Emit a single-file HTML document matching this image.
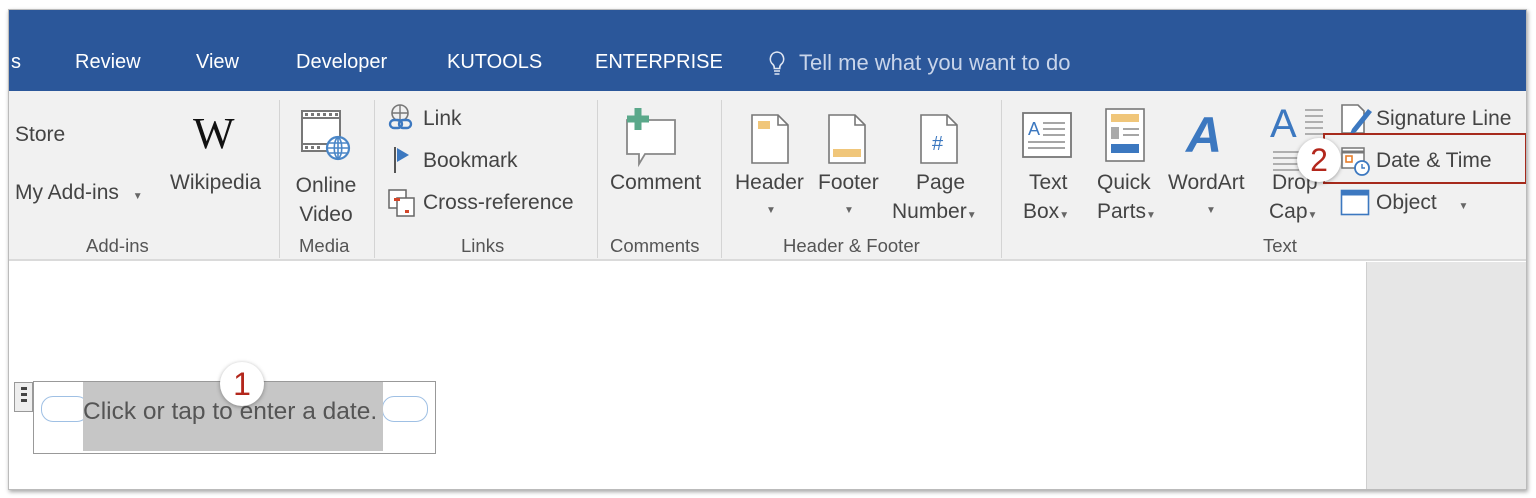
<!DOCTYPE html>
<html><head><meta charset="utf-8"><style>
*{margin:0;padding:0;box-sizing:border-box}
body{width:1536px;height:498px;background:#fff;position:relative;overflow:hidden;font-family:"Liberation Sans",sans-serif;color:#444}
.frame{position:absolute;left:8px;top:9px;width:1519px;height:481px;border:1px solid #bbb;box-shadow:1px 2px 4px rgba(0,0,0,.35);overflow:hidden;background:#fff}
.blue{position:absolute;left:0;top:0;width:100%;height:81px;background:#2b579a}
.tab{position:absolute;top:41px;color:#fff;font-size:20px}
.rib{position:absolute;left:0;top:81px;width:100%;height:170px;background:#f1f1f1;border-bottom:2px solid #dadada}
.t{position:absolute;font-size:21px;color:#444;white-space:nowrap}
.g{position:absolute;top:225px;font-size:18.5px;color:#555}
.sep{position:absolute;top:90px;width:1px;height:158px;background:#d4d4d4}
.c{text-align:center}
.arr{font-size:10px;color:#666}
.doc{position:absolute;left:0;top:252px;width:1357px;height:230px;background:#fff}
.grey{position:absolute;left:1357px;top:252px;width:162px;height:230px;background:#e6e6e6;border-left:1px solid #cfcfcf}
.badge{position:absolute;width:44px;height:44px;border-radius:50%;background:#fff;box-shadow:0 1px 4px rgba(0,0,0,.35);color:#b3271c;font-size:32px;text-align:center;line-height:44px}
</style></head><body>
<div class="frame">
<div class="blue">
<div class="tab" style="left:2px">s</div>
<div class="tab" style="left:66px">Review</div>
<div class="tab" style="left:187px">View</div>
<div class="tab" style="left:287px">Developer</div>
<div class="tab" style="left:438px">KUTOOLS</div>
<div class="tab" style="left:586px">ENTERPRISE</div>
<svg style="position:absolute;left:757px;top:40px" width="22" height="26" viewBox="0 0 22 26"><path d="M11 2a7 7 0 0 0-4 12.5c1 1 1.3 2 1.3 4h5.4c0-2 .3-3 1.3-4A7 7 0 0 0 11 2z" fill="none" stroke="#dfe6f2" stroke-width="1.6"/><path d="M8 21h6M8.5 24h5" stroke="#dfe6f2" stroke-width="1.6"/></svg>
<div class="tab" style="left:790px;color:#c9d5ea;font-size:22px;top:40px">Tell me what you want to do</div>
</div>
<div class="rib"></div>
<!-- Add-ins -->
<div class="t" style="left:6px;top:113px">Store</div>
<div class="t" style="left:6px;top:171px">My Add-ins <span class="arr" style="margin-left:8px">▼</span></div>
<div class="t" style="left:184px;top:98px;font-family:'Liberation Serif',serif;font-size:44px;color:#111">W</div>
<div class="t" style="left:161px;top:161px">Wikipedia</div>
<div class="g" style="left:77px">Add-ins</div>
<div class="sep" style="left:270px"></div>
<!-- Media -->
<svg style="position:absolute;left:290px;top:99px" width="52" height="52" viewBox="0 0 52 52"><rect x="3" y="2" width="38" height="40" fill="#fff" stroke="#777" stroke-width="2"/><path d="M3 9h38M3 35h38" stroke="#777" stroke-width="2"/><g fill="#777"><rect x="6" y="4" width="3" height="3"/><rect x="12" y="4" width="3" height="3"/><rect x="18" y="4" width="3" height="3"/><rect x="24" y="4" width="3" height="3"/><rect x="30" y="4" width="3" height="3"/><rect x="36" y="4" width="3" height="3"/><rect x="6" y="37" width="3" height="3"/><rect x="12" y="37" width="3" height="3"/><rect x="18" y="37" width="3" height="3"/></g><circle cx="39" cy="39" r="11" fill="#fff" stroke="#4a86c7" stroke-width="2.2"/><path d="M28 39h22M39 28v22M30 34h18M30 44h18M39 28c-5 4-5 18 0 22M39 28c5 4 5 18 0 22" stroke="#4a86c7" stroke-width="1.6" fill="none"/></svg>
<div class="t c" style="left:282px;top:161px;width:70px;line-height:29px">Online<br>Video</div>
<div class="g" style="left:290px">Media</div>
<div class="sep" style="left:365px"></div>
<!-- Links -->
<svg style="position:absolute;left:378px;top:93px" width="30" height="30" viewBox="0 0 30 30"><circle cx="13" cy="10" r="8" fill="none" stroke="#777" stroke-width="1.6"/><path d="M5 10h16M13 2v16" stroke="#777" stroke-width="1.4"/><rect x="3" y="17" width="12" height="8" rx="4" fill="none" stroke="#3c78c0" stroke-width="2.4"/><rect x="12" y="17" width="12" height="8" rx="4" fill="none" stroke="#3c78c0" stroke-width="2.4"/></svg>
<div class="t" style="left:414px;top:97px">Link</div>
<svg style="position:absolute;left:382px;top:135px" width="24" height="30" viewBox="0 0 24 30"><path d="M4 2v26" stroke="#555" stroke-width="2"/><path d="M6 3l12 7-12 7z" fill="#3c78c0"/></svg>
<div class="t" style="left:414px;top:139px">Bookmark</div>
<svg style="position:absolute;left:378px;top:178px" width="30" height="30" viewBox="0 0 30 30"><rect x="2" y="2" width="17" height="18" fill="#fff" stroke="#666" stroke-width="1.5"/><rect x="10" y="10" width="17" height="18" fill="#fff" stroke="#666" stroke-width="1.5"/><rect x="7" y="10" width="6" height="3" fill="#d2462a"/><rect x="18" y="22" width="4" height="3" fill="#d2462a"/></svg>
<div class="t" style="left:414px;top:181px">Cross-reference</div>
<div class="g" style="left:452px">Links</div>
<div class="sep" style="left:588px"></div>
<!-- Comments -->
<svg style="position:absolute;left:614px;top:98px" width="66" height="60" viewBox="0 0 66 60"><path d="M4 12h48v34H22l-6 10v-10H4z" fill="#fff" stroke="#888" stroke-width="1.8"/><path d="M15 0v22M4 11h22" stroke="#5aa88a" stroke-width="7"/></svg>
<div class="t" style="left:601px;top:161px">Comment</div>
<div class="g" style="left:601px">Comments</div>
<div class="sep" style="left:712px"></div>
<!-- Header & Footer -->
<svg style="position:absolute;left:741px;top:103px" width="40" height="52" viewBox="0 0 40 52"><path d="M2 2h26l10 10v38H2z" fill="#fff" stroke="#777" stroke-width="1.6"/><path d="M28 2v10h10" fill="none" stroke="#777" stroke-width="1.6"/><rect x="8" y="8" width="12" height="8" fill="#f0c67a"/></svg>
<svg style="position:absolute;left:818px;top:103px" width="40" height="52" viewBox="0 0 40 52"><path d="M2 2h26l10 10v38H2z" fill="#fff" stroke="#777" stroke-width="1.6"/><path d="M28 2v10h10" fill="none" stroke="#777" stroke-width="1.6"/><rect x="6" y="36" width="28" height="8" fill="#f0c67a"/></svg>
<svg style="position:absolute;left:910px;top:103px" width="40" height="52" viewBox="0 0 40 52"><path d="M2 2h26l10 10v38H2z" fill="#fff" stroke="#777" stroke-width="1.6"/><path d="M28 2v10h10" fill="none" stroke="#777" stroke-width="1.6"/><text x="13" y="37" font-family="Liberation Sans" font-size="20" fill="#3c78c0">#</text></svg>
<div class="t" style="left:726px;top:161px">Header</div>
<div class="t arr" style="left:757px;top:195px">▼</div>
<div class="t" style="left:809px;top:161px">Footer</div>
<div class="t arr" style="left:835px;top:195px">▼</div>
<div class="t" style="left:907px;top:161px">Page</div>
<div class="t" style="left:883px;top:190px">Number<span class="arr">▼</span></div>
<div class="g" style="left:774px">Header &amp; Footer</div>
<div class="sep" style="left:992px"></div>
<!-- Text -->
<svg style="position:absolute;left:1012px;top:101px" width="54" height="50" viewBox="0 0 54 50"><rect x="2" y="2" width="48" height="44" fill="#fff" stroke="#777" stroke-width="1.8"/><text x="7" y="24" font-family="Liberation Sans" font-size="18" fill="#3c78c0">A</text><path d="M22 12h22M22 18h22M22 24h22M7 31h37M7 37h37" stroke="#888" stroke-width="1.6"/></svg>
<svg style="position:absolute;left:1095px;top:97px" width="44" height="56" viewBox="0 0 44 56"><rect x="2" y="2" width="38" height="52" fill="#fff" stroke="#777" stroke-width="1.6"/><rect x="7" y="7" width="28" height="8" fill="#f0c67a"/><rect x="7" y="20" width="8" height="12" fill="#aaa"/><path d="M19 22h16M19 28h16" stroke="#888" stroke-width="1.6"/><rect x="7" y="37" width="28" height="9" fill="#3c78c0"/></svg>
<div class="t" style="left:1177px;top:96px;font-size:50px;font-style:italic;color:#3c78c0;font-weight:bold">A</div>
<div class="t" style="left:1261px;top:92px;font-size:40px;color:#3c78c0">A</div>
<svg style="position:absolute;left:1292px;top:98px" width="26" height="60" viewBox="0 0 26 60"><path d="M4 2h18M4 8h18M4 14h18M4 20h18M4 26h18" stroke="#999" stroke-width="1.5"/></svg>
<svg style="position:absolute;left:1262px;top:138px" width="30" height="30" viewBox="0 0 30 30"><path d="M2 4h26M2 10h26M2 16h26M2 22h26" stroke="#999" stroke-width="1.5"/></svg>
<div class="t" style="left:1020px;top:161px">Text</div>
<div class="t" style="left:1014px;top:190px">Box<span class="arr">▼</span></div>
<div class="t" style="left:1088px;top:161px">Quick</div>
<div class="t" style="left:1088px;top:190px">Parts<span class="arr">▼</span></div>
<div class="t" style="left:1159px;top:161px">WordArt</div>
<div class="t arr" style="left:1197px;top:195px">▼</div>
<div class="t" style="left:1263px;top:161px">Drop</div>
<div class="t" style="left:1260px;top:190px">Cap<span class="arr">▼</span></div>
<div class="g" style="left:1254px">Text</div>
<svg style="position:absolute;left:1331px;top:93px" width="34" height="34" viewBox="0 0 34 34"><path d="M2 2h16l6 6v22H2z" fill="#fff" stroke="#777" stroke-width="1.6"/><path d="M12 26l16-20 4 3-16 20-6 2z" fill="#3c78c0"/></svg>
<div class="t" style="left:1367px;top:97px">Signature Line</div>
<div style="position:absolute;left:1314px;top:123px;width:204px;height:51px;border:2px solid #a62a1c"></div>
<svg style="position:absolute;left:1331px;top:136px" width="32" height="32" viewBox="0 0 32 32"><rect x="2" y="2" width="22" height="20" fill="#fff" stroke="#777" stroke-width="1.5"/><path d="M2 6h22" stroke="#777" stroke-width="3"/><rect x="6" y="10" width="6" height="6" fill="none" stroke="#e87d2a" stroke-width="1.6"/><circle cx="22" cy="22" r="7" fill="#fff" stroke="#3c78c0" stroke-width="1.8"/><path d="M22 18v4h3" stroke="#3c78c0" stroke-width="1.4" fill="none"/></svg>
<div class="t" style="left:1367px;top:139px">Date &amp; Time</div>
<svg style="position:absolute;left:1331px;top:179px" width="32" height="28" viewBox="0 0 32 28"><rect x="1.5" y="1.5" width="27" height="24" fill="#fff" stroke="#3c78c0" stroke-width="1.6"/><rect x="1.5" y="1.5" width="27" height="5" fill="#3c78c0"/></svg>
<div class="t" style="left:1367px;top:181px">Object <span class="arr" style="margin-left:16px">▼</span></div>
<div class="badge" style="left:1288px;top:128px">2</div>
<!-- doc -->
<div class="doc"></div>
<div class="grey"></div>
<div style="position:absolute;left:24px;top:371px;width:403px;height:73px;border:1px solid #999"></div>
<div style="position:absolute;left:5px;top:372px;width:19px;height:30px;border:1px solid #999;background:#eee"></div>
<div style="position:absolute;left:12px;top:377px;width:6px;height:3px;background:#444;box-shadow:0 6px 0 #444,0 12px 0 #444"></div>
<div style="position:absolute;left:32px;top:386px;width:48px;height:26px;border:1px solid #9fc0e4;border-radius:12px"></div>
<div style="position:absolute;left:373px;top:386px;width:46px;height:26px;border:1px solid #9fc0e4;border-radius:12px"></div>
<div style="position:absolute;left:74px;top:372px;width:300px;height:69px;background:#c6c6c6"></div>
<div class="t" style="left:74px;top:388px;font-size:24.5px;color:#555">Click or tap to enter a date.</div>
<div class="badge" style="left:211px;top:352px">1</div>
</div>
</body></html>
